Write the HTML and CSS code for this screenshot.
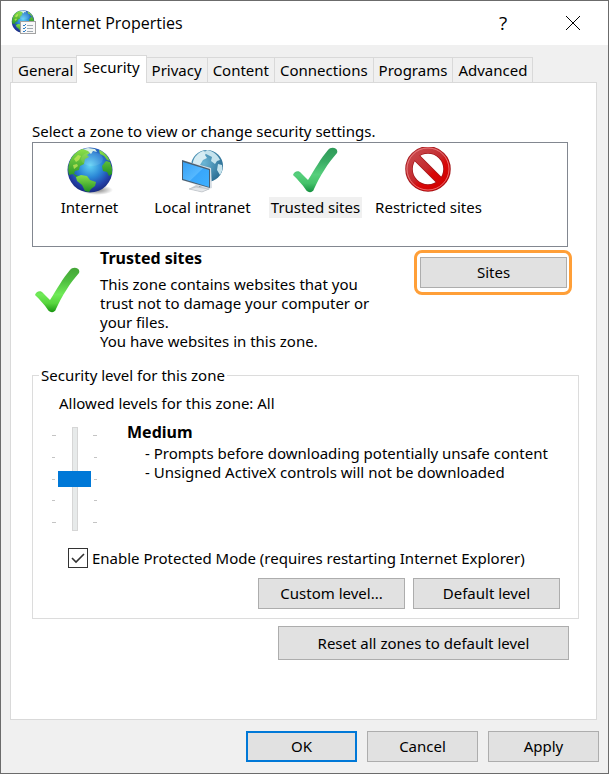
FILE: index.html
```html
<!DOCTYPE html>
<html lang="en">
<head>
    <meta charset="UTF-8">
    <meta name="viewport" content="width=device-width, initial-scale=1.0">
    <title>Internet Properties</title>
    <link rel="stylesheet" href="styles.css">
</head>
<body>
    <!-- Shared shapes and gradients -->
    <svg class="defs" width="0" height="0" aria-hidden="true">
        <defs>
            <radialGradient id="ocean" cx="0.5" cy="0.4" r="0.6">
                <stop offset="0" stop-color="#62d3f5"/>
                <stop offset="0.45" stop-color="#2a86d6"/>
                <stop offset="0.8" stop-color="#2340a8"/>
                <stop offset="1" stop-color="#182a80"/>
            </radialGradient>
            <linearGradient id="land" x1="0" y1="0" x2="0" y2="1">
                <stop offset="0" stop-color="#8be04a"/>
                <stop offset="1" stop-color="#1f8f22"/>
            </linearGradient>
            <radialGradient id="sea" cx="0.4" cy="0.4" r="0.65">
                <stop offset="0" stop-color="#6bb6d6"/>
                <stop offset="1" stop-color="#2a6c92"/>
            </radialGradient>
            <linearGradient id="screen" x1="0" y1="0" x2="1" y2="1">
                <stop offset="0" stop-color="#35a0f4"/>
                <stop offset="0.5" stop-color="#55b8ff"/>
                <stop offset="0.52" stop-color="#38a6fb"/>
                <stop offset="1" stop-color="#3fb0ff"/>
            </linearGradient>
            <linearGradient id="mint" x1="0" y1="0" x2="0" y2="1">
                <stop offset="0" stop-color="#2f9a58"/>
                <stop offset="0.3" stop-color="#3aab65"/>
                <stop offset="0.6" stop-color="#56cf7c"/>
                <stop offset="0.8" stop-color="#45c26a"/>
                <stop offset="1" stop-color="#159040"/>
            </linearGradient>
            <linearGradient id="lime" x1="0" y1="0" x2="0" y2="1">
                <stop offset="0" stop-color="#45a538"/>
                <stop offset="0.3" stop-color="#4fbf40"/>
                <stop offset="0.6" stop-color="#70ea58"/>
                <stop offset="0.8" stop-color="#58d63e"/>
                <stop offset="1" stop-color="#189410"/>
            </linearGradient>
            <linearGradient id="red" gradientUnits="userSpaceOnUse" x1="8" y1="4" x2="40" y2="42">
                <stop offset="0" stop-color="#c8484c"/>
                <stop offset="0.45" stop-color="#c42a2e"/>
                <stop offset="0.6" stop-color="#d80808"/>
                <stop offset="1" stop-color="#d00000"/>
            </linearGradient>
            <radialGradient id="shade">
                <stop offset="0" stop-color="#000" stop-opacity="0.5"/>
                <stop offset="1" stop-color="#000" stop-opacity="0"/>
            </radialGradient>
            <symbol id="globe" viewBox="0 0 48 48">
                <ellipse cx="31" cy="43" rx="16" ry="5" fill="url(#shade)"/>
                <circle cx="24" cy="23" r="22.5" fill="url(#ocean)"/>
                <path d="M3 28C0 17 6 6 16 2l6 1 2 3-3 2 2 2-4 2-1 5-4 2-1 4-4 1-1 3 4 2 3 3-4-1-4-4z" fill="url(#land)"/>
                <path d="M10 30l5-2 6 1 3 4 6 2-1 4-4 3-2 3-4-1-3-6-5-4z" fill="url(#land)"/>
                <path d="M33 3c5 2 9 6 11 11l-3-1-3-4-4-2zM40 14l4 1 2 6 0 6-3 2-2-4-4-1-1-5z" fill="url(#land)"/>
                <path d="M17 2l5-1 7 1 2 3-4-1-2 3-3-3z" fill="#d8f0e8"/>
                <path d="M8 12l4-4 3 1-2 4-3 2zM7 18l4-1 1 2-4 3z" fill="#cdea5c" opacity="0.7"/>
                <ellipse cx="26" cy="12" rx="11" ry="7" fill="#fff" opacity="0.1"/>
            </symbol>
            <symbol id="tick" viewBox="0 0 46 46">
                <path d="M1 28C2 24 7 23 9 26L16 33C23 22 29 11 36 3C39-1 47 1 45 6C36 16 28 29 22 42C21 46 16 46 14 43C10 37 6 33 1 28Z"/>
            </symbol>
        </defs>
    </svg>

    <div class="window">
        <header class="title-bar">
            <svg class="title-icon" viewBox="0 0 26 26" aria-hidden="true">
                <use href="#globe" width="24" height="24"/>
                <rect x="9.5" y="11.5" width="15" height="12" fill="#f8f8f8" stroke="#a2a2a2"/>
                <path d="M16 15.5h6M16 18.5h6M16 21.5h6" stroke="#a0a8b0"/>
                <path d="M12 15l1 1 2-2M12 18l1 1 2-2M12 21l1 1 2-2" fill="none" stroke="#2d7bc4"/>
            </svg>
            <h1>Internet Properties</h1>
            <button type="button" class="caption-btn help-btn" aria-label="Help">?</button>
            <button type="button" class="caption-btn" aria-label="Close">
                <svg width="16" height="16" viewBox="0 0 16 16"><path d="M1 1l14 14M15 1L1 15" stroke="#000" fill="none"/></svg>
            </button>
        </header>

        <main>
            <div class="tabs" role="tablist">
                <button type="button" role="tab">General</button>
                <button type="button" role="tab" class="active" aria-selected="true">Security</button>
                <button type="button" role="tab">Privacy</button>
                <button type="button" role="tab">Content</button>
                <button type="button" role="tab">Connections</button>
                <button type="button" role="tab">Programs</button>
                <button type="button" role="tab">Advanced</button>
            </div>

            <section class="panel" role="tabpanel">
                <p>Select a zone to view or change security settings.</p>
                <div class="zones">
                    <button type="button" class="zone">
                        <svg viewBox="0 0 48 48" aria-hidden="true"><use href="#globe"/></svg>
                        <span>Internet</span>
                    </button>
                    <button type="button" class="zone">
                        <svg viewBox="0 0 48 48" aria-hidden="true">
                            <circle cx="28" cy="19" r="16" fill="url(#sea)"/>
                            <path d="M14 15c1-5 5-9 10-11l4 1-2 3 2 3-4 2-3 5-3 4-4-1z" fill="#d6ecf3"/>
                            <path d="M28 3c6 1 11 5 13 10l-3 1-2 3-4-3 1-4-4-2-4-2zM39 17l4 1c1 4 0 7-2 10l-3-5z" fill="#c5e3ed"/>
                            <path d="M17 38l12 1 2 3-8 3-13-3z" fill="#cbd0d5"/>
                            <path d="M20 35h5v5h-5z" fill="#9ca3aa"/>
                            <path d="M3 13l29 8 1 20-4 1L3 33z" fill="#d8dfe5"/>
                            <path d="M3 13l28 9v19L3 33z" fill="#4b5f70"/>
                            <path d="M4 15l26 8v17L4 32z" fill="url(#screen)"/>
                            <path d="M10 42l7-2 13 2-7 3z" fill="#e4e7ea" stroke="#aab0b6" stroke-width="0.5"/>
                        </svg>
                        <span>Local intranet</span>
                    </button>
                    <button type="button" class="zone selected">
                        <svg viewBox="0 0 48 48" aria-hidden="true"><use href="#tick" width="46" height="46" fill="url(#mint)"/></svg>
                        <span>Trusted sites</span>
                    </button>
                    <button type="button" class="zone">
                        <svg viewBox="0 0 48 48" aria-hidden="true">
                            <circle cx="23" cy="22" r="19" fill="#fff" stroke="#a01418" stroke-width="7.5"/>
                            <path d="M11 10l24 24" stroke="#a01418" stroke-width="8"/>
                            <circle cx="23" cy="22" r="19" fill="none" stroke="url(#red)" stroke-width="6"/>
                            <path d="M10 9l26 26" stroke="url(#red)" stroke-width="6.5"/>
                            <circle cx="23" cy="22" r="21" fill="none" stroke="#ee8888" stroke-width="0.8"/>
                        </svg>
                        <span>Restricted sites</span>
                    </button>
                </div>

                <div class="zone-info">
                    <svg class="zone-icon" viewBox="0 0 48 48" aria-hidden="true"><use href="#tick" width="46" height="46" fill="url(#lime)"/></svg>
                    <div class="zone-text">
                        <h2>Trusted sites</h2>
                        <p>This zone contains websites that you<br>trust not to damage your computer or<br>your files.</p>
                        <p>You have websites in this zone.</p>
                    </div>
                    <div class="highlight">
                        <button type="button" class="btn">Sites</button>
                    </div>
                </div>

                <fieldset>
                    <legend>Security level for this zone</legend>
                    <label class="allowed" for="level">Allowed levels for this zone: All</label>
                    <div class="level">
                        <div class="slider">
                            <div class="ticks"><i></i><i></i><i></i><i></i><i></i></div>
                            <input type="range" id="level" min="1" max="5" value="3">
                            <div class="ticks"><i></i><i></i><i></i><i></i><i></i></div>
                        </div>
                        <div class="level-text">
                            <h2>Medium</h2>
                            <p>- Prompts before downloading potentially unsafe content</p>
                            <p>- Unsigned ActiveX controls will not be downloaded</p>
                        </div>
                    </div>
                    <div class="protected">
                        <input type="checkbox" id="protectedMode" checked>
                        <label for="protectedMode">Enable Protected Mode (requires restarting Internet Explorer)</label>
                    </div>
                    <div class="level-buttons">
                        <button type="button" class="btn">Custom level...</button>
                        <button type="button" class="btn">Default level</button>
                    </div>
                </fieldset>

                <button type="button" class="btn reset">Reset all zones to default level</button>
            </section>
        </main>

        <footer>
            <button type="button" class="btn default">OK</button>
            <button type="button" class="btn">Cancel</button>
            <button type="button" class="btn">Apply</button>
        </footer>
    </div>
</body>
</html>
```
FILE: styles.css
```css
* {
    box-sizing: border-box;
}
body {
    margin: 0;
    font-family: Tahoma, "Noto Sans", sans-serif;
    font-size: 15px;
    line-height: 19px;
    color: #000;
}
h1, h2, p {
    margin: 0;
}
h2 {
    font-size: 16px;
    line-height: 19px;
}
button, input {
    margin: 0;
    font: inherit;
    color: inherit;
}
.defs {
    position: absolute;
}
.window {
    display: flex;
    flex-direction: column;
    min-height: 100vh;
    background-color: #f0f0f0;
    border: 1px solid #6b6b6b;
}

/* Title bar */
.title-bar {
    display: flex;
    align-items: center;
    height: 44px;
    padding-left: 10px;
    background-color: #fff;
}
.title-icon {
    width: 26px;
    height: 26px;
}
.title-bar h1 {
    flex: 1;
    padding-left: 4px;
    font-family: "Segoe UI", "Open Sans", sans-serif;
    font-size: 16px;
    font-weight: normal;
}
.caption-btn {
    display: flex;
    align-items: center;
    justify-content: center;
    width: 70px;
    height: 44px;
    padding: 0;
    border: none;
    background: none;
}
.help-btn {
    font-family: "Segoe UI", "Open Sans", sans-serif;
    font-size: 19px;
}

/* Tabs */
main {
    display: flex;
    flex: 1;
    flex-direction: column;
    padding: 10px 11px 0 9px;
}
.tabs {
    display: flex;
    align-items: flex-end;
    padding-left: 2px;
}
.tabs button {
    height: 25px;
    padding: 0 5px;
    border: 1px solid #d9d9d9;
    border-width: 1px 1px 0 0;
    background-color: #f0f0f0;
}
.tabs button:first-child {
    border-left-width: 1px;
}
.tabs .active {
    height: 28px;
    padding: 0 6px 4px;
    margin: 0 0 -1px -3px;
    border-left-width: 1px;
    background-color: #fff;
    z-index: 1;
}
.panel {
    display: flex;
    flex: 1;
    flex-direction: column;
    padding: 39px 17px 20px 21px;
    background-color: #fff;
    border: 1px solid #d9d9d9;
}

/* Zone list */
.zones {
    display: flex;
    height: 105px;
    margin: 1px 11px 0 0;
    padding-top: 4px;
    border: 1px solid #828790;
}
.zone {
    display: flex;
    flex: 0 0 113px;
    flex-direction: column;
    align-items: center;
    gap: 2px;
    padding: 0;
    border: none;
    background: none;
    white-space: nowrap;
}
.zone svg, .zone-icon {
    width: 48px;
    height: 48px;
}
.zone span {
    padding: 1px 2px;
}
.zone.selected span {
    background-color: #f0f0f0;
}
.zone-info {
    display: flex;
    align-items: flex-start;
    margin-right: 7px;
    padding-top: 2px;
}
.zone-icon {
    margin: 18px 18px 0 2px;
}
.zone-text {
    flex: 1;
}
.zone-text h2 {
    margin-bottom: 7px;
}
.highlight {
    display: flex;
    margin-top: 1px;
    padding: 4px 2px 4px 3px;
    border: 3px solid #ff9f38;
    border-radius: 8px;
}

/* Buttons */
.btn {
    width: 147px;
    height: 31px;
    padding: 0;
    border: 1px solid #adadad;
    background-color: #e1e1e1;
}
.btn.default {
    border: 2px solid #0078d7;
}
.btn.reset {
    align-self: flex-end;
    width: 291px;
    height: 34px;
    margin: 7px 10px 0 0;
}

/* Security level */
fieldset {
    min-width: 0;
    margin: 15px 0 0;
    padding: 9px 18px 9px 26px;
    border: 1px solid #dcdcdc;
}
legend {
    margin-left: -20px;
    padding: 0 2px;
}
.allowed {
    display: block;
}
.level {
    display: flex;
    gap: 30px;
    margin-top: 14px;
}
.slider {
    display: flex;
    width: 45px;
    height: 104px;
    margin-left: -7px;
}
.ticks {
    display: flex;
    flex: 1;
    flex-direction: column;
    justify-content: space-between;
    padding: 8px 0;
}
.ticks i {
    width: 3px;
    height: 1px;
    background-color: #c4c4c4;
}
.ticks:last-child {
    align-items: flex-end;
}
.ticks i:first-child, .ticks i:last-child {
    width: 4px;
}
.slider input {
    width: 33px;
    height: 104px;
    appearance: none;
    writing-mode: vertical-lr;
    direction: rtl;
    background: linear-gradient(#e7eaea, #e7eaea) center / 4px 102px no-repeat,
                linear-gradient(#d6d6d6, #d6d6d6) center / 6px 104px no-repeat;
}
.slider input::-webkit-slider-runnable-track {
    width: 33px;
    height: 104px;
}
.slider input::-webkit-slider-thumb {
    width: 33px;
    height: 16px;
    appearance: none;
    background-color: #0078d7;
}
.level-text {
    margin-top: -4px;
}
.level-text h2 {
    margin-bottom: 2px;
}
.level-text p {
    padding-left: 18px;
}
.protected {
    display: flex;
    align-items: center;
    gap: 4px;
    margin: 17px 0 10px 9px;
}
.protected input {
    width: 20px;
    height: 20px;
    appearance: none;
    border: 1px solid #333;
    background-color: #fff;
}
.protected input:checked {
    background-image: url("data:image/svg+xml,%3Csvg xmlns='http://www.w3.org/2000/svg' viewBox='0 0 18 18'%3E%3Cpath d='M3 9l4 4 8-8' fill='none' stroke='%23333' stroke-width='1.6'/%3E%3C/svg%3E");
}
.level-buttons {
    display: flex;
    justify-content: flex-end;
    gap: 8px;
}

footer {
    display: flex;
    justify-content: flex-end;
    gap: 10px;
    padding: 11px 9px;
}
footer .btn {
    width: 111px;
}
```
